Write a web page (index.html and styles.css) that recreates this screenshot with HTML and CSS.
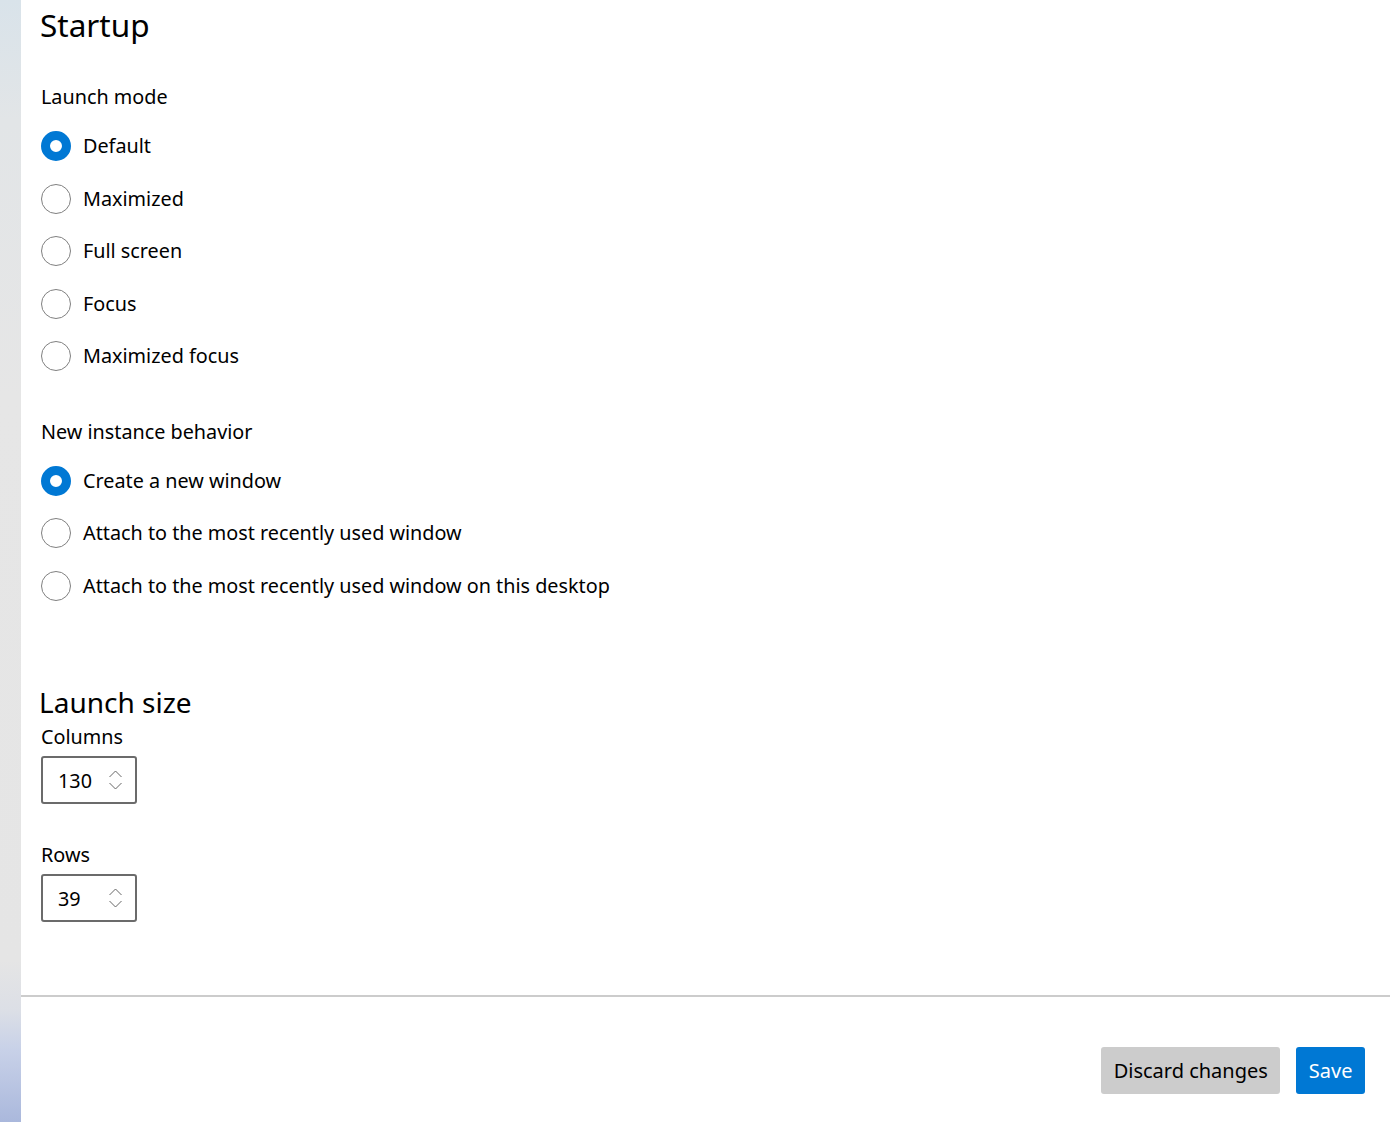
FILE: index.html
```html
<!DOCTYPE html>
<html lang="en">
<head>
<meta charset="utf-8">
<title>Startup</title>
<link rel="stylesheet" href="styles.css">
</head>
<body>
<div class="app">
  <div class="sidebar"></div>
  <div class="main">
    <div class="content">
      <h1 class="title">Startup</h1>

      <div class="group group-launch">
        <div class="group-label">Launch mode</div>
        <div class="radio-row"><span class="radio checked"></span><span class="radio-text">Default</span></div>
        <div class="radio-row"><span class="radio"></span><span class="radio-text">Maximized</span></div>
        <div class="radio-row"><span class="radio"></span><span class="radio-text">Full screen</span></div>
        <div class="radio-row"><span class="radio"></span><span class="radio-text">Focus</span></div>
        <div class="radio-row"><span class="radio"></span><span class="radio-text">Maximized focus</span></div>
      </div>

      <div class="group group-instance">
        <div class="group-label">New instance behavior</div>
        <div class="radio-row"><span class="radio checked"></span><span class="radio-text">Create a new window</span></div>
        <div class="radio-row"><span class="radio"></span><span class="radio-text">Attach to the most recently used window</span></div>
        <div class="radio-row"><span class="radio"></span><span class="radio-text">Attach to the most recently used window on this desktop</span></div>
      </div>

      <h2 class="section-title">Launch size</h2>
      <div class="field">
        <div class="field-label">Columns</div>
        <div class="number-box">
          <span class="number-value">130</span>
          <svg class="spin" width="13" height="20" viewBox="0 0 13 20"><path d="M0.5 7 L6.5 1 L12.5 7 M0.5 13 L6.5 19 L12.5 13" fill="none" stroke="#666666" stroke-width="1"/></svg>
        </div>
      </div>
      <div class="field field-rows">
        <div class="field-label">Rows</div>
        <div class="number-box">
          <span class="number-value">39</span>
          <svg class="spin" width="13" height="20" viewBox="0 0 13 20"><path d="M0.5 7 L6.5 1 L12.5 7 M0.5 13 L6.5 19 L12.5 13" fill="none" stroke="#666666" stroke-width="1"/></svg>
        </div>
      </div>
    </div>
    <div class="divider"></div>
    <div class="footer">
      <button class="btn btn-secondary">Discard changes</button>
      <button class="btn btn-primary">Save</button>
    </div>
  </div>
</div>
</body>
</html>
```

FILE: styles.css
```css
html, body {
  margin: 0;
  padding: 0;
  background: #ffffff;
}
body {
  font-family: "Noto Sans", "Open Sans", sans-serif;
  color: #000000;
  font-size: 19.8px;
}
.app {
  display: flex;
  width: 1390px;
  height: 1122px;
  overflow: hidden;
}
.sidebar {
  width: 21px;
  flex: 0 0 21px;
  background: linear-gradient(to bottom, #d9e3ea 0px, #e2e5e7 120px, #e6e6e6 400px, #e5e5e5 960px, #dcdfe6 1010px, #c8d1e8 1050px, #aab8dc 1122px);
}
.main {
  flex: 1;
  display: flex;
  flex-direction: column;
}
.content {
  height: 995px;
  padding-left: 20px;
  box-sizing: border-box;
}
.title {
  margin: 0;
  padding-top: 6px;
  font-size: 31.5px;
  line-height: 38px;
  height: 38px;
  font-weight: 400;
  margin-left: -1px;
}
.group-launch {
  margin-top: 39px;
}
.group-instance {
  margin-top: 35px;
}
.group-label {
  line-height: 28px;
  height: 28px;
  margin-bottom: 9px;
}
.radio-row {
  display: flex;
  align-items: center;
  gap: 12px;
  height: 52.5px;
}
.radio {
  width: 30px;
  height: 30px;
  box-sizing: border-box;
  border-radius: 50%;
  border: 1.5px solid #808080;
  flex: 0 0 30px;
  background: #fff;
}
.radio.checked {
  border: 9px solid #0078d4;
  background: #ffffff;
}
.radio-text {
  line-height: 28px;
}
.section-title {
  margin: 73px 0 0 -2px;
  font-size: 28px;
  font-weight: 400;
  line-height: 34px;
  height: 34px;
}
.field-label {
  line-height: 28px;
  height: 28px;
  margin-bottom: 5px;
}
.field {
  margin-top: 4px;
}
.field-rows {
  margin-top: 37px;
}
.number-box {
  width: 96px;
  height: 48px;
  box-sizing: border-box;
  border: 2px solid #6b6b6b;
  border-radius: 3px;
  display: flex;
  align-items: center;
  padding-left: 15px;
  padding-right: 13px;
}
.number-value {
  flex: 1;
}
.spin {
  display: block;
}
.divider {
  height: 2px;
  background: #cccccc;
}
.footer {
  display: flex;
  justify-content: flex-end;
  gap: 16px;
  padding: 50px 25px 0 0;
}
.btn {
  height: 47px;
  border: none;
  border-radius: 3px;
  font-family: "Noto Sans", "Open Sans", sans-serif;
  font-size: 20px;
  padding: 0 12.5px;
  cursor: pointer;
}
.btn-secondary {
  background: #cccccc;
  color: #000000;
}
.btn-primary {
  background: #0078d4;
  color: #ffffff;
}
```
